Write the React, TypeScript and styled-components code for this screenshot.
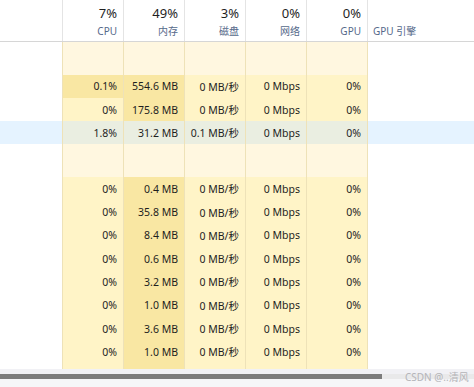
import React from "react";
import styled, { createGlobalStyle } from "styled-components";

const Global = createGlobalStyle`
  html, body { margin: 0; padding: 0; background: #ffffff; overflow: hidden; }
  * { box-sizing: border-box; }
`;

const FONT = `"Noto Sans", "Noto Sans CJK SC", sans-serif`;

const Window = styled.div`
  position: relative;
  width: 474px;
  height: 387px;
  overflow: hidden;
  display: flex;
  flex-direction: column;
  font-family: ${FONT};
  background: #ffffff;
`;

const Cols = `grid-template-columns: 62px repeat(5, 61px) 1fr;`;

const HeaderRow = styled.div`
  display: grid;
  ${Cols}
  height: 42px;
  border-bottom: 1px solid #d6d6d6;
  flex: none;
`;

const HeadCell = styled.div<{ $first?: boolean; $left?: boolean }>`
  border-left: ${(p) => (p.$first ? "none" : "1px solid #e4e4e4")};
  display: flex;
  flex-direction: column;
  align-items: ${(p) => (p.$left ? "flex-start" : "flex-end")};
  padding: 0 6px 0 5px;
`;

const HeadValue = styled.div`
  font-size: 13px;
  color: #1f1f1f;
  line-height: 16px;
  margin-top: 5px;
  height: 16px;
`;

const HeadLabel = styled.div`
  font-size: 10px;
  color: #55698a;
  line-height: 12px;
  margin-top: 4px;
`;

const Body = styled.div`
  flex: none;
  height: 327px;
  overflow: hidden;
`;

const Row = styled.div<{ $group?: boolean; $selected?: boolean }>`
  display: grid;
  ${Cols}
  height: ${(p) => (p.$group ? "32.6px" : "23.3px")};
  background: ${(p) => (p.$selected ? "#e5f3ff" : "#ffffff")};
`;

const Cell = styled.div<{ $tone: "group" | "base" | "hot" | "sel" }>`
  border-left: 1px solid #eee2b8;
  background: ${(p) =>
    p.$tone === "group"
      ? "#fff7e0"
      : p.$tone === "hot"
      ? "#f9e7a3"
      : p.$tone === "sel"
      ? "#eaeee1"
      : "#fff4c7"};
  display: flex;
  align-items: center;
  justify-content: flex-end;
  padding-right: 6px;
  font-size: 10.5px;
  color: #1e1e1e;
  white-space: nowrap;
`;

const Blank = styled.div<{ $edge?: boolean }>`
  border-left: ${(p) => (p.$edge ? "1px solid #eee2b8" : "none")};
`;

const ScrollArea = styled.div`
  flex: none;
  height: 18px;
  display: flex;
  flex-direction: column;
  background: #f6f6f8;
`;

const ScrollGap = styled.div`
  height: 5px;
  background: #f1f1f5;
`;

const Track = styled.div`
  height: 5px;
  background: #e9e9ea;
  display: flex;
`;

const Thumb = styled.div`
  width: 382px;
  background: #7c7c7c;
`;

const Watermark = styled.div`
  position: absolute;
  left: 405px;
  top: 369px;
  font-size: 10px;
  line-height: 16px;
  color: #b4b4b8;
  font-family: ${FONT};
  white-space: nowrap;
`;

type Data = {
  group?: boolean;
  selected?: boolean;
  cpu?: string;
  mem?: string;
  disk?: string;
  net?: string;
  gpu?: string;
  hotCpu?: boolean;
  hotMem?: boolean;
};

const d = (cpu: string, mem: string, disk = "0 MB/秒", extra: Partial<Data> = {}): Data => ({
  cpu,
  mem,
  disk,
  net: "0 Mbps",
  gpu: "0%",
  hotMem: true,
  ...extra,
});

const rows: Data[] = [
  { group: true },
  d("0.1%", "554.6 MB", "0 MB/秒", { hotCpu: true }),
  d("0%", "175.8 MB"),
  d("1.8%", "31.2 MB", "0.1 MB/秒", { selected: true }),
  { group: true },
  d("0%", "0.4 MB"),
  d("0%", "35.8 MB"),
  d("0%", "8.4 MB"),
  d("0%", "0.6 MB"),
  d("0%", "3.2 MB"),
  d("0%", "1.0 MB"),
  d("0%", "3.6 MB"),
  d("0%", "1.0 MB"),
  { cpu: "", mem: "", disk: "", net: "", gpu: "", hotMem: true },
];

const headers = [
  { v: "7%", l: "CPU" },
  { v: "49%", l: "内存" },
  { v: "3%", l: "磁盘" },
  { v: "0%", l: "网络" },
  { v: "0%", l: "GPU" },
];

export default function App() {
  return (
    <Window>
      <Global />
      <HeaderRow>
        <HeadCell $first />
        {headers.map((h) => (
          <HeadCell key={h.l}>
            <HeadValue>{h.v}</HeadValue>
            <HeadLabel>{h.l}</HeadLabel>
          </HeadCell>
        ))}
        <HeadCell $left>
          <HeadValue />
          <HeadLabel>GPU 引擎</HeadLabel>
        </HeadCell>
      </HeaderRow>
      <Body>
        {rows.map((r, i) => {
          const tone = (hot?: boolean) =>
            r.group ? "group" : r.selected ? "sel" : hot ? "hot" : "base";
          return (
            <Row key={i} $group={r.group} $selected={r.selected}>
              <Blank />
              <Cell $tone={tone(r.hotCpu)}>{r.cpu}</Cell>
              <Cell $tone={tone(r.hotMem)}>{r.mem}</Cell>
              <Cell $tone={tone()}>{r.disk}</Cell>
              <Cell $tone={tone()}>{r.net}</Cell>
              <Cell $tone={tone()}>{r.gpu}</Cell>
              <Blank $edge />
            </Row>
          );
        })}
      </Body>
      <ScrollArea>
        <ScrollGap />
        <Track>
          <Thumb />
        </Track>
      </ScrollArea>
      <Watermark>CSDN @..清风</Watermark>
    </Window>
  );
}
